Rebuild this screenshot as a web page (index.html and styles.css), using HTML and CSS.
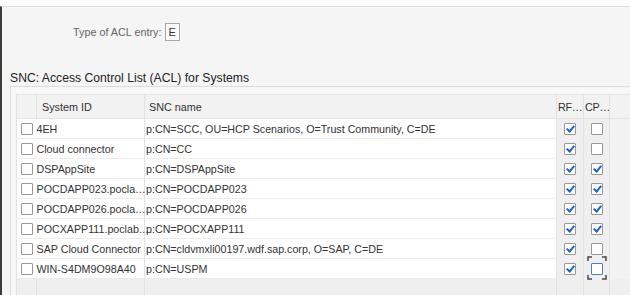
FILE: index.html
```html
<!DOCTYPE html>
<html lang="en">
<head>
    <meta charset="UTF-8">
    <title>SNC: Access Control List</title>
    <link rel="stylesheet" href="styles.css">
</head>
<body>
    <div class="screen">
        <div class="type-row">
            <label class="type-label" for="acl-type">Type of ACL entry:</label>
            <span class="type-input" id="acl-type">E</span>
        </div>

        <div class="section-title">SNC: Access Control List (ACL) for Systems</div>

        <div class="panel">
            <table class="acl-table">
                <colgroup>
                    <col class="c-sel">
                    <col class="c-sys">
                    <col class="c-snc">
                    <col class="c-flag">
                    <col class="c-flag2">
                    <col class="c-rest">
                </colgroup>
                <thead>
                    <tr>
                        <th></th>
                        <th class="h-sys">System ID</th>
                        <th class="h-snc">SNC name</th>
                        <th class="h-flag">RF…</th>
                        <th class="h-flag">CP…</th>
                        <th></th>
                    </tr>
                </thead>
                <tbody>
                    <tr>
                        <td class="sel"><span class="cb"></span></td>
                        <td class="sys">4EH</td>
                        <td class="snc">p:CN=SCC, OU=HCP Scenarios, O=Trust Community, C=DE</td>
                        <td class="flag"><span class="cb checked"></span></td>
                        <td class="flag"><span class="cb"></span></td>
                        <td class="rest"></td>
                    </tr>
                    <tr>
                        <td class="sel"><span class="cb"></span></td>
                        <td class="sys">Cloud connector</td>
                        <td class="snc">p:CN=CC</td>
                        <td class="flag"><span class="cb checked"></span></td>
                        <td class="flag"><span class="cb"></span></td>
                        <td class="rest"></td>
                    </tr>
                    <tr>
                        <td class="sel"><span class="cb"></span></td>
                        <td class="sys">DSPAppSite</td>
                        <td class="snc">p:CN=DSPAppSite</td>
                        <td class="flag"><span class="cb checked"></span></td>
                        <td class="flag"><span class="cb checked"></span></td>
                        <td class="rest"></td>
                    </tr>
                    <tr>
                        <td class="sel"><span class="cb"></span></td>
                        <td class="sys">POCDAPP023.pocla…</td>
                        <td class="snc">p:CN=POCDAPP023</td>
                        <td class="flag"><span class="cb checked"></span></td>
                        <td class="flag"><span class="cb checked"></span></td>
                        <td class="rest"></td>
                    </tr>
                    <tr>
                        <td class="sel"><span class="cb"></span></td>
                        <td class="sys">POCDAPP026.pocla…</td>
                        <td class="snc">p:CN=POCDAPP026</td>
                        <td class="flag"><span class="cb checked"></span></td>
                        <td class="flag"><span class="cb checked"></span></td>
                        <td class="rest"></td>
                    </tr>
                    <tr>
                        <td class="sel"><span class="cb"></span></td>
                        <td class="sys">POCXAPP111.poclab.…</td>
                        <td class="snc">p:CN=POCXAPP111</td>
                        <td class="flag"><span class="cb checked"></span></td>
                        <td class="flag"><span class="cb checked"></span></td>
                        <td class="rest"></td>
                    </tr>
                    <tr>
                        <td class="sel"><span class="cb"></span></td>
                        <td class="sys">SAP Cloud Connector</td>
                        <td class="snc">p:CN=cldvmxli00197.wdf.sap.corp, O=SAP, C=DE</td>
                        <td class="flag"><span class="cb checked"></span></td>
                        <td class="flag"><span class="cb"></span></td>
                        <td class="rest"></td>
                    </tr>
                    <tr>
                        <td class="sel"><span class="cb"></span></td>
                        <td class="sys">WIN-S4DM9O98A40</td>
                        <td class="snc">p:CN=USPM</td>
                        <td class="flag"><span class="cb checked"></span></td>
                        <td class="flag">
                            <span class="focus-wrap">
                                <span class="cb focused"></span>
                                <svg class="focus-ring" width="20" height="24" viewBox="0 0 20 24">
                                    <path d="M1 5V1H5 M15 1H19V5 M19 19V23H15 M5 23H1V19" fill="none" stroke="#4a4a4a" stroke-width="1.5"/>
                                </svg>
                            </span>
                        </td>
                        <td class="rest"></td>
                    </tr>
                    <tr class="filler">
                        <td></td><td></td><td></td><td></td><td></td><td></td>
                    </tr>
                </tbody>
            </table>
        </div>
    </div>
</body>
</html>
```

FILE: styles.css
```css
:root {
    --page-bg: #f5f5f5;
    --line: #e2e2e2;
    --head-bg: #f2f2f2;
    --flag-bg: #efefef;
    --text: #333333;
    --muted: #666666;
    --check: #1f5fc8;
}

html, body {
    margin: 0;
    height: 100%;
    overflow: hidden;
}

body {
    background: #ffffff;
    font-family: "Liberation Sans", Arial, sans-serif;
    font-size: 10.7px;
    color: var(--text);
}

.screen {
    margin-top: 6px;
    height: calc(100% - 6px);
    box-sizing: border-box;
    border-top: 1px solid #dedede;
    border-left: 2px solid #3c3c3c;
    background: var(--page-bg);
}

.type-row {
    display: flex;
    align-items: center;
    gap: 4px;
    padding: 16px 0 0 71px;
    height: 18px;
}

.type-label {
    color: var(--muted);
    font-size: 10.8px;
}

.type-input {
    width: 11px;
    height: 16px;
    border: 1px solid #a8a8a8;
    background: #f9f9f9;
    color: var(--text);
    font-size: 11px;
    line-height: 16px;
    padding-left: 2px;
}

.section-title {
    margin: 29px 0 0 8px;
    font-size: 12.2px;
    line-height: 16px;
    color: #222;
}

.panel {
    margin-left: 8px;
    border-top: 1px solid #dcdcdc;
    border-left: 1px solid #dcdcdc;
    background: #f7f7f7;
    padding: 7px 0 0 5px;
}

.acl-table {
    border-collapse: collapse;
    table-layout: fixed;
    width: 614px;
}

.c-sel { width: 20px; }
.c-sys { width: 108px; }
.c-snc { width: 412px; }
.c-flag { width: 27px; }
.c-flag2 { width: 26px; }
.c-rest { width: 21px; }

.acl-table th {
    height: 23px;
    background: var(--head-bg);
    border: 1px solid var(--line);
    font-weight: normal;
    font-size: 10.8px;
    text-align: left;
    color: var(--text);
    padding: 0;
    white-space: nowrap;
}

.acl-table th:last-child {
    border-right: none;
}

.acl-table th.h-sys { padding-left: 5px; }
.acl-table th.h-snc { padding-left: 4px; }
.acl-table th.h-flag { padding-left: 1px; letter-spacing: -0.3px; }

.acl-table td {
    height: 19px;
    padding: 0;
    border-bottom: 1px solid #ececec;
    border-left: 1px solid var(--line);
    background: #ffffff;
    white-space: nowrap;
}

.acl-table td.sel {
    text-align: center;
}

.acl-table td.sys {
    border-left: none;
}

.acl-table td.snc {
    padding-left: 1px;
}

.acl-table td.flag {
    background: var(--flag-bg);
    text-align: center;
    border-bottom-color: var(--flag-bg);
}

.acl-table td.rest {
    background: var(--head-bg);
    border-bottom-color: var(--head-bg);
}

.acl-table tr.filler td {
    height: 30px;
    background: var(--flag-bg);
    border-bottom: none;
}

.acl-table tr.filler td:nth-child(2) {
    border-left: 1px solid var(--line);
}

.cb {
    display: inline-block;
    position: relative;
    width: 10px;
    height: 10px;
    border: 1px solid #989898;
    border-radius: 1px;
    background: #ffffff;
    vertical-align: middle;
}

.cb.checked::after {
    content: "";
    position: absolute;
    left: 3px;
    top: 0;
    width: 3px;
    height: 6px;
    border-right: 2px solid var(--check);
    border-bottom: 2px solid var(--check);
    transform: rotate(40deg);
}

.cb.focused {
    border-color: #4a7fc8;
}

.focus-wrap {
    position: relative;
    display: inline-block;
    vertical-align: middle;
    line-height: 0;
}

.focus-ring {
    position: absolute;
    left: -4px;
    top: -7px;
}
```
